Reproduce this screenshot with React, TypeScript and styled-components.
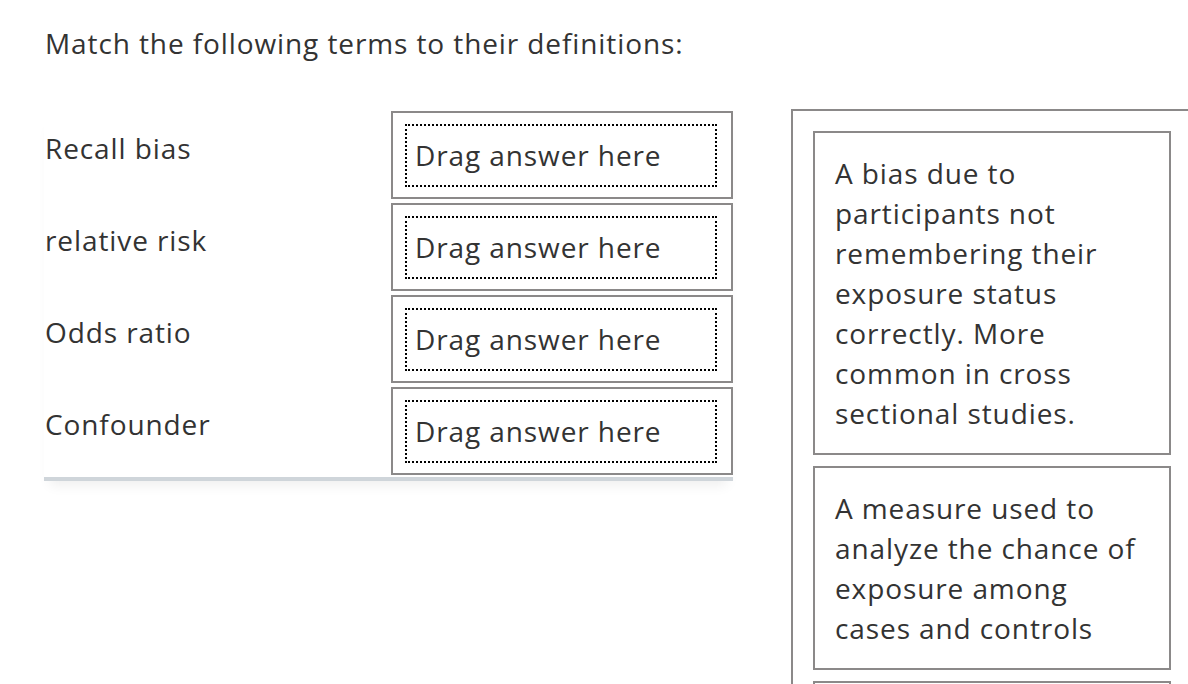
import styled, { createGlobalStyle } from "styled-components";

const GlobalStyle = createGlobalStyle`
  html, body {
    margin: 0;
    padding: 0;
    background: #ffffff;
    overflow: hidden;
  }
  body {
    font-family: "Open Sans", "Liberation Sans", sans-serif;
    color: #333333;
    letter-spacing: 0.9px;
  }
`;

const terms = ["Recall bias", "relative risk", "Odds ratio", "Confounder"];

const answers = [
  "A bias due to participants not remembering their exposure status correctly. More common in cross sectional studies.",
  "A measure used to analyze the chance of exposure among cases and controls",
  "",
];

export default function App() {
  return (
    <Page>
      <GlobalStyle />
      <Title>Match the following terms to their definitions:</Title>
      <Board>
        <MatchTable>
          {terms.map((term) => (
            <MatchRow key={term}>
              <Term>{term}</Term>
              <DropBox>
                <DropTarget>Drag answer here</DropTarget>
              </DropBox>
            </MatchRow>
          ))}
        </MatchTable>
        <AnswerPool>
          {answers.map((text, i) => (
            <AnswerCard key={i}>{text}</AnswerCard>
          ))}
        </AnswerPool>
      </Board>
    </Page>
  );
}

const Page = styled.div`
  padding-left: 44px;
  height: 684px;
  box-sizing: border-box;
  overflow: hidden;
`;

const Title = styled.h2`
  margin: 23px 0 46px 1px;
  font-size: 28px;
  font-weight: 400;
  line-height: 40px;
  color: #333333;
`;

const Board = styled.div`
  display: flex;
  align-items: flex-start;
  gap: 58px;
`;

const MatchTable = styled.div`
  width: 690px;
  padding: 2px 0 2px;
  display: flex;
  flex-direction: column;
  gap: 4px;
  background: #ffffff;
  box-shadow: 0 4px 0 #cfd5da, 0 14px 12px -6px rgba(0, 0, 0, 0.07);
`;

const MatchRow = styled.div`
  display: flex;
  align-items: flex-start;
`;

const Term = styled.div`
  width: 347px;
  padding: 17px 0 0 1px;
  box-sizing: border-box;
  font-size: 28px;
  line-height: 40px;
`;

const DropBox = styled.div`
  width: 342px;
  box-sizing: border-box;
  border: 2px solid #8b8989;
  padding: 11px 14px 10px 12px;
`;

const DropTarget = styled.div`
  height: 63px;
  box-sizing: border-box;
  border: 2px dotted #000000;
  padding-left: 8px;
  font-size: 28px;
  line-height: 59px;
  white-space: nowrap;
`;

const AnswerPool = styled.div`
  width: 440px;
  flex-shrink: 0;
  height: 575px;
  box-sizing: border-box;
  overflow: hidden;
  border-top: 2px solid #8b8989;
  border-left: 2px solid #8b8989;
  padding: 20px 0 0 20px;
  display: flex;
  flex-direction: column;
  gap: 11px;
`;

const AnswerCard = styled.div`
  width: 358px;
  flex-shrink: 0;
  box-sizing: border-box;
  border: 2px solid #8b8989;
  padding: 20px 30px 20px 20px;
  font-size: 28px;
  line-height: 40px;
  min-height: 80px;
`;
